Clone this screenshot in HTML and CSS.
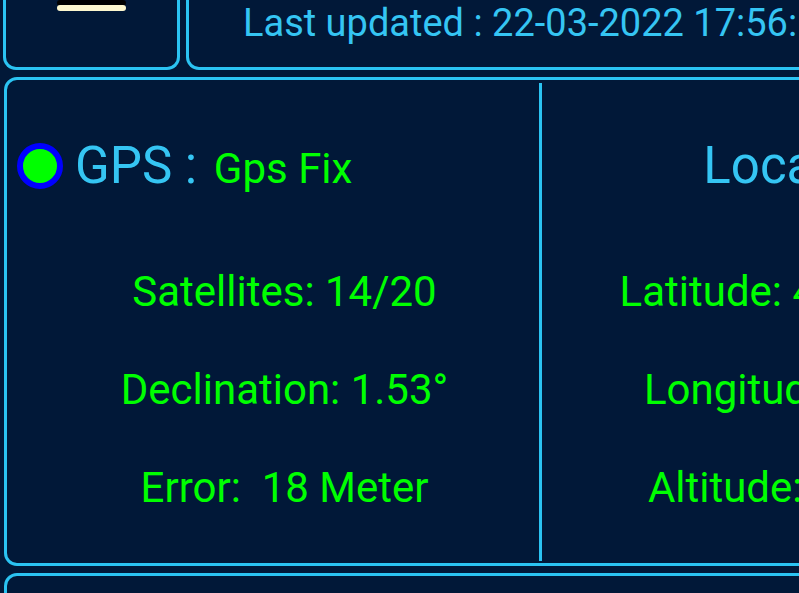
FILE: index.html
```html
<!DOCTYPE html>
<html>
<head>
<meta charset="utf-8">
<link rel="stylesheet" href="styles.css">
</head>
<body>
<div class="screen">
  <div class="topbar">
    <div class="menu-card"><div class="menu-bar"></div></div>
    <div class="status-card">Last updated : 22-03-2022 17:56:12</div>
  </div>
  <div class="main-card">
    <div class="col col-left">
      <div class="heading">
        <span class="dot"></span>
        <span class="heading-text">GPS : <span class="fix">Gps Fix</span></span>
      </div>
      <div class="rows">
        <div class="row">Satellites: 14/20</div>
        <div class="row">Declination: 1.53°</div>
        <div class="row">Error:&nbsp; 18 Meter</div>
      </div>
    </div>
    <div class="divider"></div>
    <div class="col col-right">
      <div class="heading heading-center">
        <span class="heading-text">Location</span>
      </div>
      <div class="rows">
        <div class="row">Latitude: 45.50884°</div>
        <div class="row">Longitude: -9.19°</div>
        <div class="row">Altitude: 5 Meter</div>
      </div>
    </div>
  </div>
  <div class="bottom-card"></div>
</div>
</body>
</html>
```
FILE: styles.css
```css
html, body {
  margin: 0;
  padding: 0;
  background: #011838;
  overflow: hidden;
  width: 799px;
  height: 593px;
}
body {
  font-family: Roboto, "Liberation Sans", sans-serif;
}
.screen {
  width: 1200px;
}
.topbar {
  display: flex;
  gap: 6px;
  height: 70px;
  padding-left: 3px;
}
.menu-card {
  box-sizing: border-box;
  width: 177px;
  height: 70px;
  border: 3px solid #2bc3f2;
  border-top: none;
  border-radius: 0 0 13px 13px;
  display: flex;
  justify-content: center;
  flex: none;
}
.menu-bar {
  width: 69px;
  height: 6px;
  margin-top: 5px;
  background: #fdf7cf;
  border-radius: 3px;
  box-shadow: 0 -5px 0 #000;
}
.status-card {
  box-sizing: border-box;
  flex: none;
  width: 1000px;
  height: 70px;
  border: 3px solid #2bc3f2;
  border-top: none;
  border-radius: 0 0 13px 13px;
  padding: 4px 0 0 54px;
  font-size: 38px;
  line-height: 38px;
  color: #35c5f3;
  white-space: nowrap;
}
.main-card {
  box-sizing: border-box;
  margin: 7px 0 0 4px;
  height: 489px;
  width: 1061px;
  border: 3px solid #2bc3f2;
  border-radius: 13px;
  display: flex;
}
.col {
  flex: none;
  padding-top: 56px;
}
.col-left {
  width: 532px;
}
.col-right {
  width: 520px;
}
.divider {
  flex: none;
  width: 3px;
  margin: 3px 0 2px;
  background: #2bc3f2;
}
.heading {
  display: flex;
  align-items: center;
  height: 60px;
}
.heading-center {
  justify-content: center;
}
.dot {
  box-sizing: border-box;
  width: 46px;
  height: 46px;
  margin-left: 10px;
  border: 6px solid #0000ff;
  background: #00ff00;
  border-radius: 50%;
  flex: none;
}
.heading-text {
  margin-left: 12px;
  font-size: 51px;
  line-height: 60px;
  color: #35c5f3;
  white-space: nowrap;
}
.heading-center .heading-text {
  margin-left: 0;
}
.fix {
  margin-left: 4px;
  font-size: 42px;
  line-height: 40px;
  color: #00ff00;
}
.rows {
  margin-top: 47px;
}
.row {
  font-size: 42px;
  line-height: 98px;
  height: 98px;
  text-align: center;
  color: #00ff00;
  white-space: nowrap;
}
.col-left .row {
  padding-left: 23px;
}
.bottom-card {
  box-sizing: border-box;
  margin: 7px 0 0 4px;
  width: 1061px;
  height: 40px;
  border: 3px solid #2bc3f2;
  border-bottom: none;
  border-radius: 13px 13px 0 0;
}
```
